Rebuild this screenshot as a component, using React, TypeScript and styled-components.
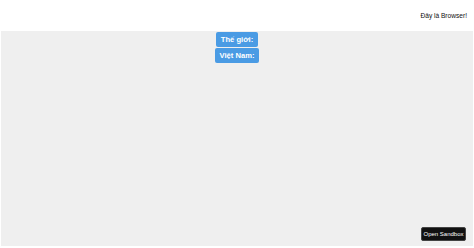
import React from "react";
import styled, { createGlobalStyle } from "styled-components";

const GlobalStyle = createGlobalStyle`
  html, body {
    margin: 0;
    padding: 0;
    background: #ffffff;
    font-family: "Liberation Sans", Arial, sans-serif;
  }
`;

const Page = styled.div`
  display: flex;
  flex-direction: column;
  width: 474px;
  height: 248px;
  box-sizing: border-box;
  padding: 0 1px 2px 1px;
`;

const Header = styled.header`
  height: 31px;
  display: flex;
  align-items: center;
  justify-content: flex-end;
  padding-right: 6px;
  font-size: 6.6px;
  color: #111;
`;

const Stage = styled.main`
  position: relative;
  flex: 1;
  background: #efefef;
  display: flex;
  flex-direction: column;
  align-items: center;
  gap: 1px;
  padding-top: 1px;
`;

const NewsButton = styled.button`
  background: #4a9be4;
  color: #ffffff;
  border: none;
  border-radius: 2px;
  font-family: "Liberation Sans", Arial, sans-serif;
  font-weight: bold;
  font-size: 7.6px;
  height: 15px;
  padding: 0 ${(p: { $pad?: number }) => p.$pad ?? 4}px;
  cursor: pointer;
`;

const SandboxButton = styled.button`
  position: absolute;
  right: 7px;
  bottom: 5px;
  background: #111;
  color: #fff;
  border: 1px solid #444;
  border-radius: 2px;
  font-family: "Liberation Sans", Arial, sans-serif;
  font-size: 6px;
  height: 14px;
  width: 45px;
  padding: 0;
`;

export default function App() {
  return (
    <>
      <GlobalStyle />
      <Page>
        <Header>Đây là Browser!</Header>
        <Stage>
          <NewsButton $pad={5}>Thế giới:</NewsButton>
          <NewsButton $pad={5}>Việt Nam:</NewsButton>
          <SandboxButton>Open Sandbox</SandboxButton>
        </Stage>
      </Page>
    </>
  );
}
